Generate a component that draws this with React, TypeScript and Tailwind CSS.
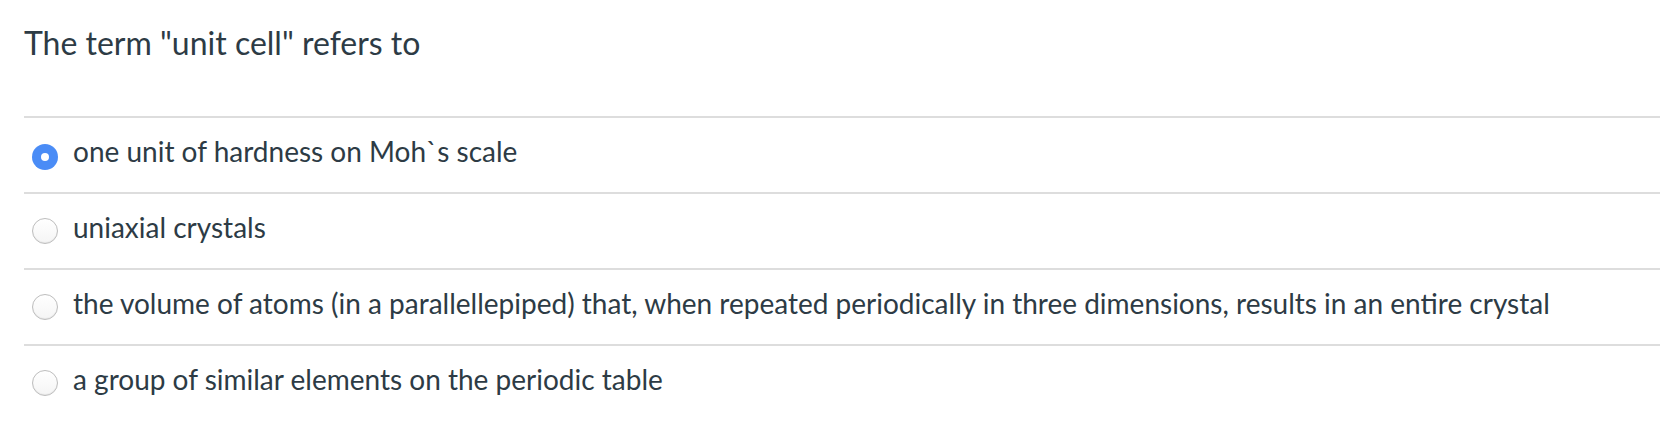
import { useState } from 'react'

const options = [
    'one unit of hardness on Moh`s scale',
    'uniaxial crystals',
    'the volume of atoms (in a parallellepiped) that, when repeated periodically in three dimensions, results in an entire crystal',
    'a group of similar elements on the periodic table'
]

export default function App() {
    const [selected, setSelected] = useState(0)

    return (
        <div className="w-[1660px] h-[442px] bg-white pl-6 text-[#2d3b45] font-['Lato','Liberation_Sans',sans-serif] overflow-hidden">
            <div className="h-[116px] pt-[27px]">
                <p className="text-[32px] leading-none">The term "unit cell" refers to</p>
            </div>
            {options.map((option, i) => (
                <label
                    key={option}
                    onClick={() => setSelected(i)}
                    className="h-[76px] border-t-2 border-[#dddddd] flex items-center gap-[15px] pl-2 cursor-pointer"
                >
                    {selected === i ? (
                        <span className="mt-[3px] w-[26px] h-[26px] rounded-full bg-[#4a8cf6] flex items-center justify-center shrink-0">
                            <span className="w-2 h-2 rounded-full bg-white" />
                        </span>
                    ) : (
                        <span className="-mt-[1px] w-[26px] h-[26px] rounded-full border border-[#bdbdbd] bg-gradient-to-b from-white to-[#f5f5f5] shadow-[inset_0_-1px_1px_rgba(0,0,0,0.06)] shrink-0" />
                    )}
                    <span className="text-[28px] leading-none mb-[9px]">{option}</span>
                </label>
            ))}
        </div>
    )
}
